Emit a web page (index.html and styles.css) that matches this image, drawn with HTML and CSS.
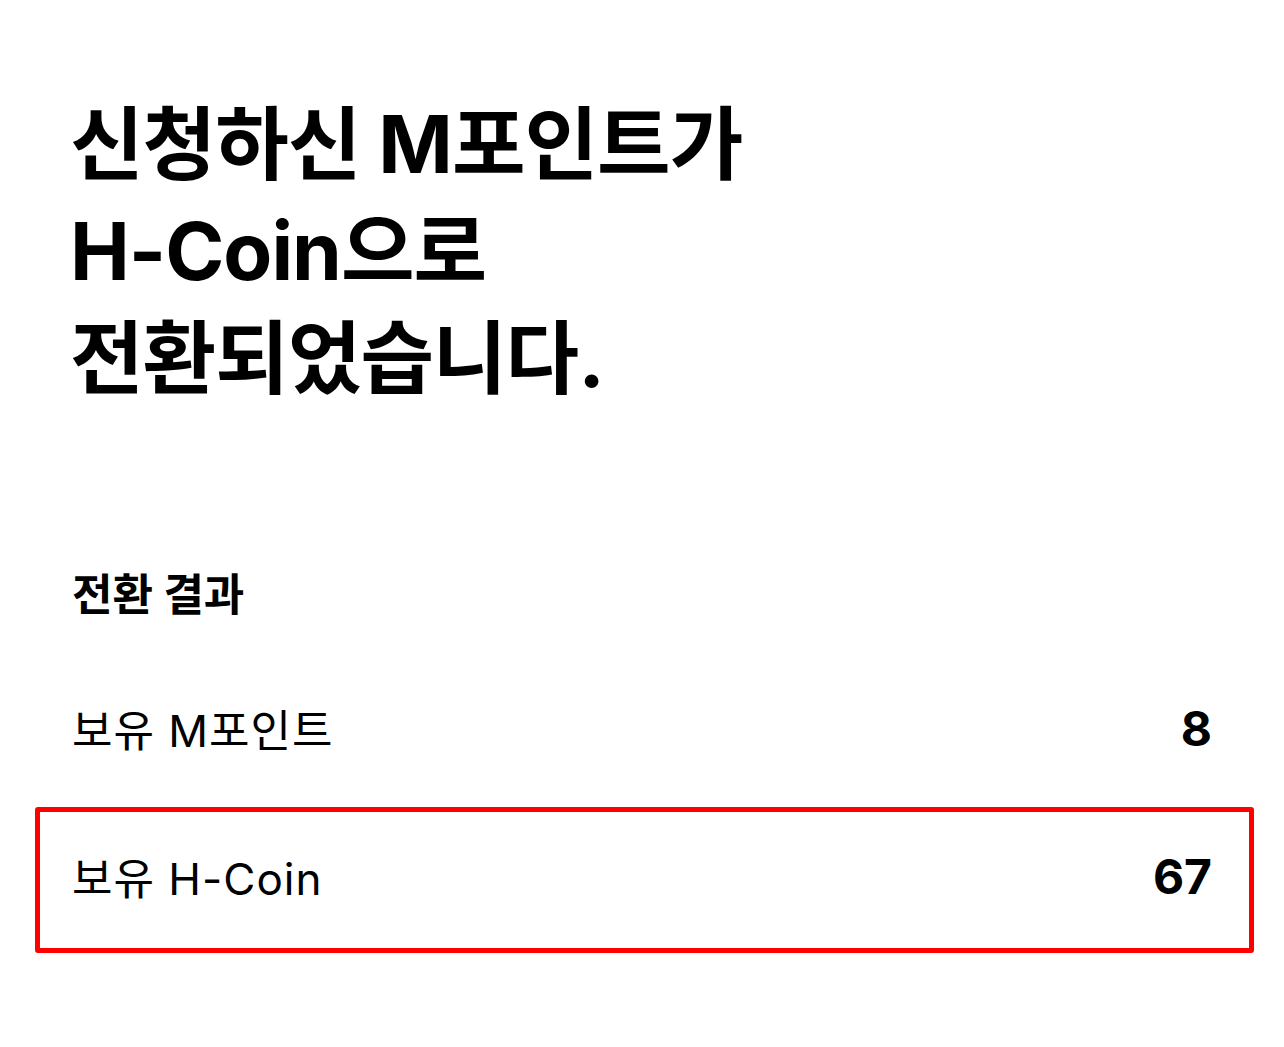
FILE: index.html
```html
<!DOCTYPE html>
<html lang="ko">
<head>
<meta charset="UTF-8">
<meta name="viewport" content="width=device-width, initial-scale=1.0">
<title>전환 완료</title>
<link rel="stylesheet" href="styles.css">
</head>
<body>

<div class="page">
  <h1 class="title">신청하신 M포인트가<br>H-Coin으로<br>전환되었습니다.</h1>

  <h2 class="section">전환 결과</h2>

  <div class="row">
    <span class="label">보유 M포인트</span>
    <span class="value">8</span>
  </div>
  <div class="row mark">
    <span class="label">보유 H-Coin</span>
    <span class="value">67</span>
  </div>
</div>

</body>
</html>
```

FILE: styles.css
```css
body {
  margin: 0;
  background: #fff;
  color: #000;
  font-family: Inter, "Noto Sans CJK KR", sans-serif;
}

.page {
  padding: 90px 30px 0 35px;
}

.title {
  margin: 0;
  padding-left: 35px;
  font-size: 80px;
  line-height: 107px;
  font-weight: 700;
  letter-spacing: -1px;
}

.section {
  margin: 154px 0 0;
  padding-left: 37px;
  font-size: 44px;
  line-height: 60px;
  font-weight: 700;
}

.row {
  display: flex;
  justify-content: space-between;
  align-items: center;
  height: 146px;
  padding: 0 42px 8px 37px;
  box-sizing: border-box;
}

.row:first-of-type {
  margin-top: 34px;
}

.row + .row {
  margin-top: 2px;
}

.mark {
  border: 5px solid #ff0000;
  border-radius: 3px;
  padding: 0 37px 8px 32px;
}

.label {
  font-size: 44px;
  font-weight: 400;
  letter-spacing: 1px;
}

.value {
  font-size: 48px;
  font-weight: 700;
}
```
